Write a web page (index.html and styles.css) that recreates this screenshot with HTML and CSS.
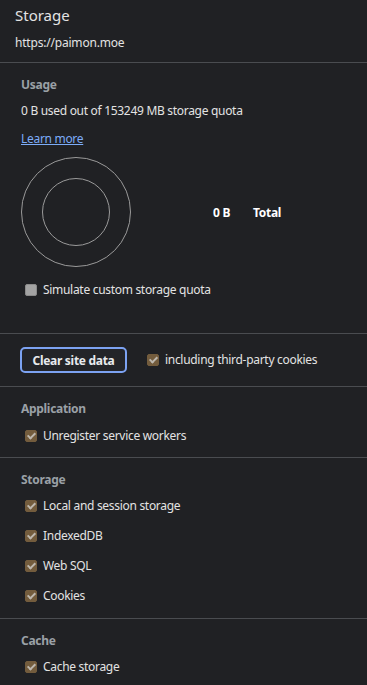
FILE: index.html
```html
<!DOCTYPE html>
<html lang="en">
<head>
    <meta charset="UTF-8">
    <meta name="viewport" content="width=device-width, initial-scale=1.0">
    <title>Storage</title>
    <link rel="stylesheet" href="styles.css">
</head>
<body>
  <div class="header">
    <div class="title">Storage</div>
    <div class="origin">https://paimon.moe</div>
  </div>

  <div class="section usage">
    <div class="heading">Usage</div>
    <div class="line">0 B used out of 153249 MB storage quota</div>
    <div class="line learn"><a href="#">Learn more</a></div>
    <div class="chart">
      <svg width="112" height="112" viewBox="0 0 112 112">
        <circle cx="56" cy="56" r="54.5" fill="none" stroke="#9a9a9a" stroke-width="1"/>
        <circle cx="56" cy="56" r="33.5" fill="none" stroke="#9a9a9a" stroke-width="1"/>
      </svg>
      <div class="legend">
        <span>0 B</span>
        <span>Total</span>
      </div>
    </div>
    <div class="row simulate">
      <span class="box"></span>
      <span>Simulate custom storage quota</span>
    </div>
  </div>

  <div class="section clear">
    <button type="button">Clear site data</button>
    <div class="row inline">
      <span class="box checked"></span>
      <span>including third-party cookies</span>
    </div>
  </div>

  <div class="section application">
    <div class="heading">Application</div>
    <div class="row first">
      <span class="box checked"></span>
      <span>Unregister service workers</span>
    </div>
  </div>

  <div class="section storage">
    <div class="heading">Storage</div>
    <div class="row first">
      <span class="box checked"></span>
      <span>Local and session storage</span>
    </div>
    <div class="row">
      <span class="box checked"></span>
      <span>IndexedDB</span>
    </div>
    <div class="row">
      <span class="box checked"></span>
      <span>Web SQL</span>
    </div>
    <div class="row">
      <span class="box checked"></span>
      <span>Cookies</span>
    </div>
  </div>

  <div class="section cache">
    <div class="heading">Cache</div>
    <div class="row first">
      <span class="box checked"></span>
      <span>Cache storage</span>
    </div>
  </div>
</body>
</html>
```

FILE: styles.css
```css
body {
  margin: 0;
  background: #202124;
  color: #e3e3e3;
  font-family: "Noto Sans", "Open Sans", sans-serif;
  font-size: 12px;
  line-height: 16px;
  letter-spacing: -0.3px;
}
.header {
  padding: 6px 15px 11px;
  border-bottom: 1px solid #4a4c50;
}
.title {
  font-size: 15px;
  line-height: 18px;
  letter-spacing: 0;
}
.origin {
  margin-top: 11px;
  letter-spacing: -0.2px;
}
.section {
  padding: 0 21px;
  border-bottom: 1px solid #4a4c50;
}
.heading {
  color: #9aa0a6;
  font-weight: bold;
  padding-top: 14px;
}
.line {
  margin-top: 10px;
}
.learn {
  margin-top: 12px;
}
.learn a {
  color: #7cacf8;
}
.chart {
  display: flex;
  align-items: center;
  margin-top: 9px;
  margin-left: -1px;
  height: 112px;
}
.legend {
  display: flex;
  gap: 23px;
  margin-left: 81px;
  margin-top: 2px;
  font-weight: bold;
  color: #ffffff;
}
.row {
  display: flex;
  align-items: center;
  gap: 6px;
  margin-top: 14px;
  margin-left: 4px;
}
.usage {
  padding-bottom: 35px;
}
.simulate {
  margin-top: 14px;
}
.box {
  width: 12px;
  height: 12px;
  box-sizing: border-box;
  border-radius: 2px;
  background: #a3a3a3;
  border: 1px solid #8a8a8a;
  flex-shrink: 0;
}
.box.checked {
  background: #735c3d;
  border-color: #735c3d;
  position: relative;
}
.box.checked::after {
  content: "";
  position: absolute;
  left: 3px;
  top: 0px;
  width: 3px;
  height: 6px;
  border-right: 2px solid #bdb7ae;
  border-bottom: 2px solid #bdb7ae;
  transform: rotate(45deg);
}
.clear {
  display: flex;
  align-items: center;
  padding-left: 20px;
  padding-top: 13px;
  padding-bottom: 13px;
}
.clear button {
  width: 107px;
  height: 26px;
  border: 2px solid #7ca2f2;
  border-radius: 5px;
  background: #232428;
  color: #e8eaed;
  font-family: inherit;
  font-size: 12px;
  font-weight: bold;
  letter-spacing: -0.3px;
  padding: 0;
}
.inline {
  margin: 0 0 0 20px;
}
.first {
  margin-top: 11px;
}
.application {
  padding-bottom: 13px;
}
.storage .first {
  margin-top: 10px;
}
.storage {
  padding-bottom: 14px;
}
.cache {
  border-bottom: none;
  padding-bottom: 12px;
}
.cache .first {
  margin-top: 10px;
}
```
